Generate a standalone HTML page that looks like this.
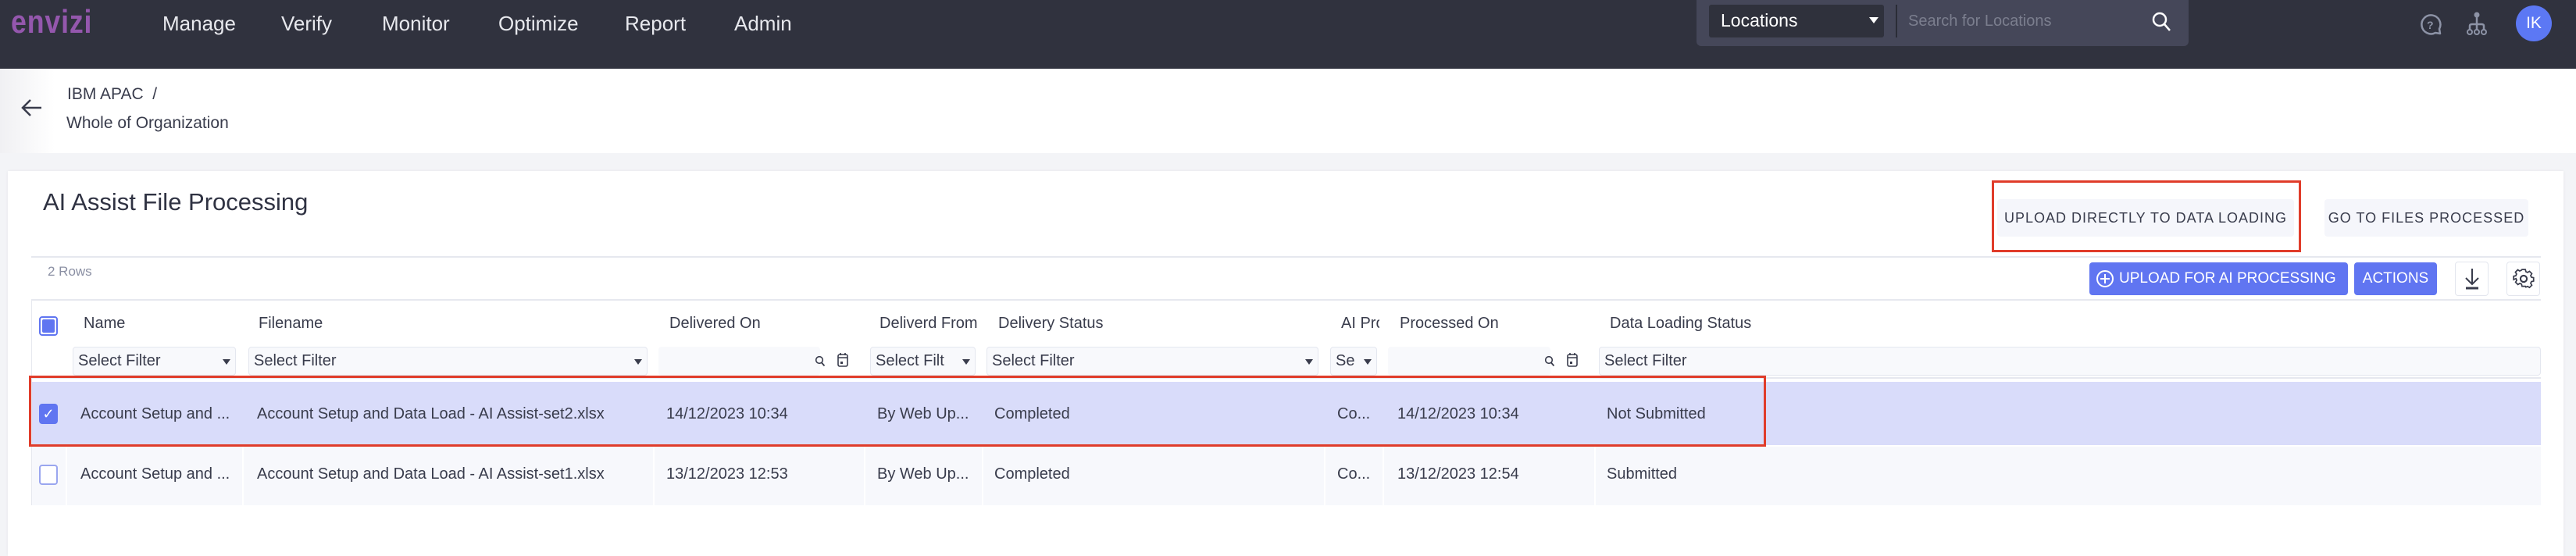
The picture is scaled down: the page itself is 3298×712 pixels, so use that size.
<!DOCTYPE html>
<html><head><meta charset="utf-8"><style>
*{margin:0;padding:0;box-sizing:border-box}
body{width:3298px;height:712px;overflow:hidden;background:#f3f4f7;font-family:"Liberation Sans",sans-serif;color:#393c4c;position:relative}
.a{position:absolute;white-space:nowrap}
.nav{left:0;top:0;width:3298px;height:88px;background:#30323e}
.nv{top:14px;font-size:26px;color:#e8e9ee;line-height:32px}
.th{font-size:20px;color:#393c4c;top:402px;line-height:24px}
.fb{top:444px;height:37px;background:#f8f9fc;border:1px solid #e4e7ef;border-radius:4px;font-size:20px;line-height:35px;padding-left:6px;color:#393c4c;overflow:hidden}
.dd{position:absolute;right:6px;top:15px;width:0;height:0;border-left:5px solid transparent;border-right:5px solid transparent;border-top:7px solid #393c4c}
.td{font-size:20px;line-height:24px}
.r1{top:518px}.r2{top:595px}
.vl{position:absolute;width:2px;background:#ffffff}
</style></head><body>
<div class="a nav"></div>
<div class="a" style="left:14px;top:5px;font-size:42px;color:#9457ad;font-weight:bold;letter-spacing:1px;transform:scaleX(0.85);transform-origin:left;line-height:46px">envizi</div>
<div class="a nv" style="left:208px">Manage</div>
<div class="a nv" style="left:360px">Verify</div>
<div class="a nv" style="left:489px">Monitor</div>
<div class="a nv" style="left:638px">Optimize</div>
<div class="a nv" style="left:800px">Report</div>
<div class="a nv" style="left:940px">Admin</div>
<div class="a" style="left:2172px;top:0;width:630px;height:59px;background:#454759;border-radius:0 0 6px 6px"></div>
<div class="a" style="left:2188px;top:6px;width:224px;height:42px;background:#2f313c;border-radius:3px"></div>
<div class="a" style="left:2203px;top:12px;font-size:23px;color:#fff;line-height:28px">Locations</div>
<div class="a" style="left:2393px;top:22px;border-left:6px solid transparent;border-right:6px solid transparent;border-top:8px solid #fff"></div>
<div class="a" style="left:2427px;top:6px;width:2px;height:42px;background:#2a2c36"></div>
<div class="a" style="left:2443px;top:14px;font-size:20px;color:#7b7e8e;line-height:26px">Search for Locations</div>
<svg class="a" style="left:2754px;top:15px" width="28" height="26" viewBox="0 0 28 26"><circle cx="11" cy="10" r="8" fill="none" stroke="#fff" stroke-width="2.5"/><line x1="17" y1="16" x2="24" y2="24" stroke="#fff" stroke-width="2.5"/></svg>
<svg class="a" style="left:3096px;top:17px" width="32" height="30" viewBox="0 0 32 30"><path d="M22 25 A12 12 0 1 1 27 20 L28 26 Z" fill="none" stroke="#8d93a6" stroke-width="2.5" stroke-linejoin="round"/><text x="11" y="20" font-size="14" font-weight="bold" fill="#8d93a6" font-family="Liberation Sans">?</text></svg>
<svg class="a" style="left:3156px;top:14px" width="30" height="32" viewBox="0 0 30 32"><circle cx="15" cy="5" r="3.5" fill="#8d93a6"/><path d="M15 8 V18 M6 24 V19 Q6 17 9 17 H21 Q24 17 24 19 V24 M15 18 V24" fill="none" stroke="#8d93a6" stroke-width="2.5"/><circle cx="6" cy="27" r="3" fill="none" stroke="#8d93a6" stroke-width="2"/><circle cx="15" cy="27" r="3" fill="none" stroke="#8d93a6" stroke-width="2"/><circle cx="24" cy="27" r="3" fill="none" stroke="#8d93a6" stroke-width="2"/></svg>
<div class="a" style="left:3221px;top:7px;width:46px;height:46px;border-radius:50%;background:#5c78f4;color:#fff;font-size:21px;line-height:46px;text-align:center">IK</div>

<div class="a" style="left:0;top:88px;width:3298px;height:108px;background:linear-gradient(90deg,#f0f0f3 0,#fff 70px)"></div>
<svg class="a" style="left:26px;top:125px" width="30" height="26" viewBox="0 0 30 26"><path d="M27 13 H4 M13 3 L3 13 L13 23" fill="none" stroke="#393c4c" stroke-width="2.5"/></svg>
<div class="a" style="left:86px;top:108px;font-size:21px;line-height:26px">IBM APAC&nbsp; /</div>
<div class="a" style="left:85px;top:145px;font-size:21px;line-height:26px">Whole of Organization</div>

<div class="a" style="left:10px;top:219px;width:3272px;height:493px;background:#fff;box-shadow:0 0 4px rgba(0,0,0,.06)"></div>
<div class="a" style="left:55px;top:240px;font-size:31px;line-height:38px;color:#2f3242">AI Assist File Processing</div>
<div class="a" style="left:2557px;top:255px;width:380px;height:48px;background:#f5f6fb;border-radius:4px;font-size:18px;letter-spacing:1px;line-height:48px;text-align:center;color:#393c4c">UPLOAD DIRECTLY TO DATA LOADING</div>
<div class="a" style="left:2550px;top:231px;width:396px;height:92px;border:3px solid #e03c2a"></div>
<div class="a" style="left:2976px;top:255px;width:261px;height:48px;background:#f5f6fb;border-radius:4px;font-size:18px;letter-spacing:1px;line-height:48px;text-align:center;color:#393c4c">GO TO FILES PROCESSED</div>
<div class="a" style="left:40px;top:328px;width:3213px;height:2px;background:#e6e8ef"></div>
<div class="a" style="left:61px;top:337px;font-size:17px;color:#8a8fa3;line-height:22px">2 Rows</div>
<div class="a" style="left:2675px;top:336px;width:331px;height:42px;background:#6075f1;border-radius:4px;color:#fff;font-size:19px;line-height:42px;padding-left:38px">UPLOAD FOR AI PROCESSING</div>
<svg class="a" style="left:2683px;top:345px" width="24" height="24" viewBox="0 0 24 24"><circle cx="12" cy="12" r="10" fill="none" stroke="#fff" stroke-width="2"/><path d="M12 6V18M6 12H18" stroke="#fff" stroke-width="2"/></svg>
<div class="a" style="left:3014px;top:336px;width:106px;height:42px;background:#6075f1;border-radius:4px;color:#fff;font-size:19px;line-height:42px;text-align:center">ACTIONS</div>
<div class="a" style="left:3143px;top:335px;width:43px;height:44px;border:1px solid #e3e6ee;border-radius:4px"></div>
<svg class="a" style="left:3152px;top:342px" width="26" height="30" viewBox="0 0 26 30"><path d="M13 2V22 M5 14 L13 22 L21 14" fill="none" stroke="#393c4c" stroke-width="2"/><path d="M5 27H21" stroke="#393c4c" stroke-width="3"/></svg>
<div class="a" style="left:3209px;top:335px;width:43px;height:44px;border:1px solid #e3e6ee;border-radius:4px"></div>
<svg class="a" style="left:3217px;top:343px" width="28" height="28" viewBox="0 0 24 24"><path d="M10 2h4l.6 2.6 2 .9 2.3-1.4 2.8 2.8-1.4 2.3.9 2 2.6.6v4l-2.6.6-.9 2 1.4 2.3-2.8 2.8-2.3-1.4-2 .9L14 22h-4l-.6-2.6-2-.9-2.3 1.4-2.8-2.8 1.4-2.3-.9-2L0 14v-4l2.6-.6.9-2-1.4-2.3 2.8-2.8 2.3 1.4 2-.9z" fill="none" stroke="#393c4c" stroke-width="1.6" transform="translate(1 0) scale(.92)"/><circle cx="12" cy="12" r="3.5" fill="none" stroke="#393c4c" stroke-width="1.8"/></svg>
<div class="a" style="left:40px;top:383px;width:3213px;height:2px;background:#e6e8ef"></div>
<div class="a" style="left:40px;top:384px;width:1px;height:263px;background:#e6e8ef"></div>

<div class="a" style="left:50px;top:405px;width:24px;height:25px;border:2px solid #6075f1;border-radius:4px;background:#fff"><div style="margin:2px;height:17px;background:#6075f1;border-radius:2px"></div></div>
<div class="a th" style="left:107px">Name</div>
<div class="a th" style="left:331px">Filename</div>
<div class="a th" style="left:857px">Delivered On</div>
<div class="a th" style="left:1126px;width:127px;overflow:hidden">Deliverd From</div>
<div class="a th" style="left:1278px">Delivery Status</div>
<div class="a th" style="left:1717px;width:49px;overflow:hidden">AI Processing</div>
<div class="a th" style="left:1792px">Processed On</div>
<div class="a th" style="left:2061px">Data Loading Status</div>

<div class="a fb" style="left:93px;width:209px">Select Filter<span class="dd"></span></div>
<div class="a fb" style="left:318px;width:511px">Select Filter<span class="dd"></span></div>
<div class="a fb" style="left:843px;width:207px;border-color:#f8f9fc"></div>
<svg class="a" style="left:1043px;top:455px" width="14" height="16" viewBox="0 0 14 16"><circle cx="6" cy="6" r="4.3" fill="none" stroke="#393c4c" stroke-width="1.6"/><line x1="9" y1="9.5" x2="12.5" y2="13.5" stroke="#393c4c" stroke-width="1.8"/></svg>
<svg class="a" style="left:1072px;top:451px" width="14" height="20" viewBox="0 0 14 20"><rect x="1" y="3" width="12" height="15" rx="2" fill="none" stroke="#393c4c" stroke-width="1.6"/><path d="M1 7H13M4 1V4M10 1V4" stroke="#393c4c" stroke-width="1.6"/><rect x="4" y="12" width="3" height="3" fill="#393c4c"/></svg>
<div class="a fb" style="left:1114px;width:135px">Select Filt<span class="dd"></span></div>
<div class="a fb" style="left:1263px;width:425px">Select Filter<span class="dd"></span></div>
<div class="a fb" style="left:1703px;width:60px">Se<span class="dd"></span></div>
<div class="a fb" style="left:1777px;width:208px;border-color:#f8f9fc"></div>
<svg class="a" style="left:1977px;top:455px" width="14" height="16" viewBox="0 0 14 16"><circle cx="6" cy="6" r="4.3" fill="none" stroke="#393c4c" stroke-width="1.6"/><line x1="9" y1="9.5" x2="12.5" y2="13.5" stroke="#393c4c" stroke-width="1.8"/></svg>
<svg class="a" style="left:2006px;top:451px" width="14" height="20" viewBox="0 0 14 20"><rect x="1" y="3" width="12" height="15" rx="2" fill="none" stroke="#393c4c" stroke-width="1.6"/><path d="M1 7H13M4 1V4M10 1V4" stroke="#393c4c" stroke-width="1.6"/><rect x="4" y="12" width="3" height="3" fill="#393c4c"/></svg>
<div class="a fb" style="left:2047px;width:1206px">Select Filter</div>
<div class="a" style="left:41px;top:483px;width:3212px;height:2px;background:#e6e8ef"></div>

<div class="a" style="left:41px;top:489px;width:3212px;height:81px;background:#d9dcfa"></div>
<div class="a" style="left:41px;top:572px;width:3212px;height:75px;background:#f7f8fc"></div>
<div class="vl" style="left:84px;top:572px;height:75px"></div>
<div class="vl" style="left:310px;top:572px;height:75px"></div>
<div class="vl" style="left:836px;top:572px;height:75px"></div>
<div class="vl" style="left:1106px;top:572px;height:75px"></div>
<div class="vl" style="left:1257px;top:572px;height:75px"></div>
<div class="vl" style="left:1695px;top:572px;height:75px"></div>
<div class="vl" style="left:1770px;top:572px;height:75px"></div>
<div class="vl" style="left:2041px;top:572px;height:75px"></div>

<div class="a" style="left:50px;top:517px;width:24px;height:26px;background:#6075f1;border-radius:4px;color:#fff;font-size:18px;line-height:26px;text-align:center">&#10003;</div>
<div class="a td r1" style="left:103px">Account Setup and ...</div>
<div class="a td r1" style="left:329px">Account Setup and Data Load - AI Assist-set2.xlsx</div>
<div class="a td r1" style="left:853px">14/12/2023 10:34</div>
<div class="a td r1" style="left:1123px">By Web Up...</div>
<div class="a td r1" style="left:1273px">Completed</div>
<div class="a td r1" style="left:1712px">Co...</div>
<div class="a td r1" style="left:1789px">14/12/2023 10:34</div>
<div class="a td r1" style="left:2057px">Not Submitted</div>

<div class="a" style="left:50px;top:595px;width:24px;height:26px;background:#fff;border:2px solid #9aa6ef;border-radius:4px"></div>
<div class="a td r2" style="left:103px">Account Setup and ...</div>
<div class="a td r2" style="left:329px">Account Setup and Data Load - AI Assist-set1.xlsx</div>
<div class="a td r2" style="left:853px">13/12/2023 12:53</div>
<div class="a td r2" style="left:1123px">By Web Up...</div>
<div class="a td r2" style="left:1273px">Completed</div>
<div class="a td r2" style="left:1712px">Co...</div>
<div class="a td r2" style="left:1789px">13/12/2023 12:54</div>
<div class="a td r2" style="left:2057px">Submitted</div>

<div class="a" style="left:37px;top:481px;width:2224px;height:91px;border:3px solid #e03c2a"></div>
</body></html>
